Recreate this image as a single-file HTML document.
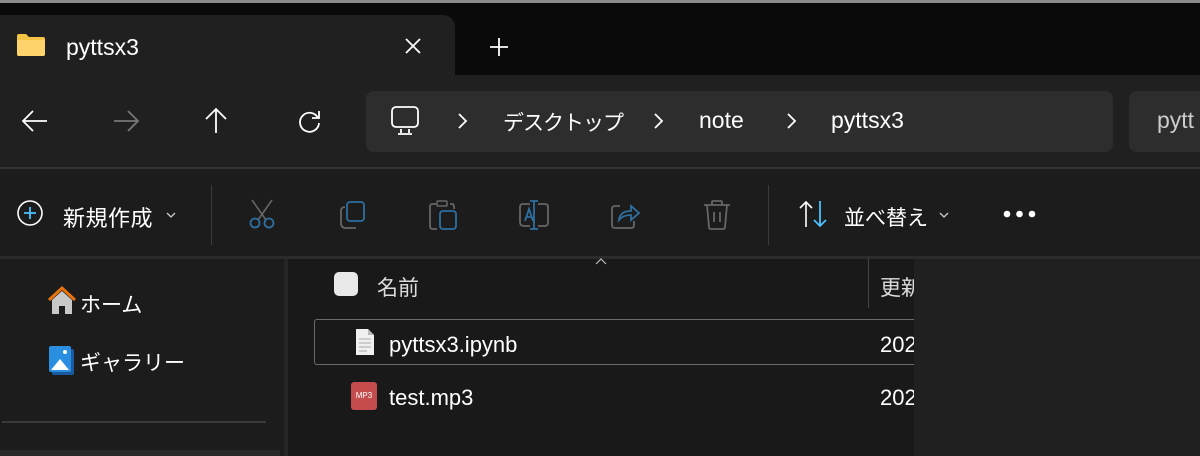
<!DOCTYPE html>
<html><head><meta charset="utf-8"><style>
*{margin:0;padding:0;box-sizing:border-box}
body{width:1200px;height:456px;overflow:hidden;background:#191919;font-family:"Liberation Sans","Noto Sans CJK JP",sans-serif;color:#fff;position:relative}
.a{position:absolute}
svg{position:absolute;overflow:visible}
.t{font-size:22px;white-space:nowrap;position:absolute}
</style></head><body>
<div class="a" style="left:0;top:0;width:1200px;height:3px;background:#8a8a8a"></div>
<div class="a" style="left:0;top:3px;width:1200px;height:73px;background:#0a0a0a"></div>
<div class="a" style="left:0;top:15px;height:70px;background:#202020;border-radius:0 12px 0 0;width:455px"></div>
<div class="a" style="left:0;top:75px;width:1200px;height:93px;background:#202020"></div>
<!-- tab -->
<svg style="left:17px;top:34px" width="28" height="22"><path d="M0 2 Q0 0 2 0 H9 L12 3 H26 Q28 3 28 5 V20 Q28 22 26 22 H2 Q0 22 0 20Z" fill="#f6c445"/><path d="M0 6 H28 V20 Q28 22 26 22 H2 Q0 22 0 20Z" fill="#ffd36b"/></svg>
<div class="t" style="left:66px;top:34px;font-size:23px">pyttsx3</div>
<svg style="left:405px;top:38px" width="16" height="16"><path d="M1 1L15 15M15 1L1 15" stroke="#fff" stroke-width="1.8"/></svg>
<svg style="left:490px;top:38px" width="18" height="18"><path d="M9 0V18M0 9H18" stroke="#fff" stroke-width="1.8"/></svg>
<!-- nav -->
<svg style="left:22px;top:110px" width="26" height="22"><path d="M1 11H25M11 1L1 11L11 21" stroke="#fff" stroke-width="1.8" fill="none"/></svg>
<svg style="left:113px;top:110px" width="26" height="22"><path d="M1 11H25M15 1L25 11L15 21" stroke="#777" stroke-width="1.8" fill="none"/></svg>
<svg style="left:205px;top:108px" width="22" height="26"><path d="M11 25V1M1 11L11 1L21 11" stroke="#fff" stroke-width="1.8" fill="none"/></svg>
<svg style="left:298px;top:109px" width="24" height="24"><path d="M20 9A9.5 9.5 0 1 0 21 14M21 2V9H14" stroke="#fff" stroke-width="1.8" fill="none"/></svg>
<div class="a" style="left:366px;top:91px;width:747px;height:61px;background:#2d2d2d;border-radius:8px"></div>
<div class="a" style="left:1129px;top:91px;width:100px;height:61px;background:#2d2d2d;border-radius:8px"></div>
<svg style="left:391px;top:106px" width="28" height="30"><rect x="1" y="1" width="26" height="20" rx="4" stroke="#fff" stroke-width="1.8" fill="none"/><path d="M10 23V27M18 23V27M7 28H21" stroke="#fff" stroke-width="1.8"/></svg>
<svg style="left:458px;top:113px" width="10" height="16"><path d="M1 1L8 8L1 15" stroke="#fff" stroke-width="1.8" fill="none"/></svg>
<div class="t" style="left:503px;top:107px;font-size:21px;letter-spacing:-1px">デスクトップ</div>
<svg style="left:654px;top:113px" width="10" height="16"><path d="M1 1L8 8L1 15" stroke="#fff" stroke-width="1.8" fill="none"/></svg>
<div class="t" style="left:699px;top:107px;font-size:23px">note</div>
<svg style="left:787px;top:113px" width="10" height="16"><path d="M1 1L8 8L1 15" stroke="#fff" stroke-width="1.8" fill="none"/></svg>
<div class="t" style="left:831px;top:107px;font-size:23px">pyttsx3</div>
<div class="t" style="left:1157px;top:107px;color:#ccc;font-size:23px">pytt</div>
<!-- toolbar -->
<div class="a" style="left:0;top:167px;width:1200px;height:2px;background:#343434"></div>
<div class="a" style="left:0;top:169px;width:1200px;height:87px;background:#1c1c1c"></div>
<svg style="left:17px;top:200px" width="26" height="26"><circle cx="13" cy="13" r="12" stroke="#fff" stroke-width="1.6" fill="none"/><path d="M13 7V19M7 13H19" stroke="#4cc2ff" stroke-width="1.8"/></svg>
<div class="t" style="left:63px;top:201px;font-size:22px;letter-spacing:0.5px">新規作成</div>
<svg style="left:166px;top:212px" width="10" height="6"><path d="M1 1L5 5L9 1" stroke="#ccc" stroke-width="1.3" fill="none"/></svg>
<div class="a" style="left:211px;top:185px;width:1px;height:60px;background:#3a3a3a"></div>
<svg style="left:249px;top:200px" width="26" height="30"><path d="M3 0L17 20M23 0L9 20" stroke="#666" stroke-width="1.6"/><circle cx="6" cy="23" r="4.5" stroke="#2f6f9f" stroke-width="1.8" fill="none"/><circle cx="20" cy="23" r="4.5" stroke="#2f6f9f" stroke-width="1.8" fill="none"/></svg>
<svg style="left:340px;top:201px" width="26" height="28"><rect x="7" y="1" width="17" height="19" rx="3" stroke="#2f6f9f" stroke-width="1.8" fill="none"/><path d="M5 6Q1 6 1 10V22Q1 27 6 27H16" stroke="#666" stroke-width="1.8" fill="none"/></svg>
<svg style="left:429px;top:200px" width="28" height="30"><path d="M7 4H3Q1 4 1 7V26Q1 29 4 29H8M21 4H23Q25 4 25 7V9" stroke="#666" stroke-width="1.8" fill="none"/><rect x="8" y="1" width="10" height="5" rx="1" stroke="#666" stroke-width="1.6" fill="none"/><rect x="11" y="11" width="16" height="18" rx="3" stroke="#2f6f9f" stroke-width="1.8" fill="none"/></svg>
<svg style="left:519px;top:200px" width="30" height="30"><path d="M11 4H4Q1 4 1 7V22Q1 26 5 26H11M19 4H26Q29 4 29 7V22Q29 26 26 26H19" stroke="#666" stroke-width="1.8" fill="none"/><path d="M15 1V29M11 1H19M11 29H19M6 21L10 9L14 21M7 17H13" stroke="#2f6f9f" stroke-width="1.8" fill="none"/></svg>
<svg style="left:611px;top:201px" width="30" height="28"><path d="M9 5H4Q1 5 1 8V24Q1 27 4 27H20Q23 27 23 24V20" stroke="#666" stroke-width="1.8" fill="none"/><path d="M8 19Q9 10 20 10V5L28 12L20 19V14Q12 14 8 19Z" stroke="#2f6f9f" stroke-width="1.8" fill="none"/></svg>
<svg style="left:703px;top:200px" width="28" height="30"><path d="M1 5H27M9 5V2Q9 1 10 1H18Q19 1 19 2V5M4 5L6 27Q6 29 8 29H20Q22 29 22 27L24 5M11 12V22M17 12V22" stroke="#666" stroke-width="1.8" fill="none"/></svg>
<div class="a" style="left:768px;top:185px;width:1px;height:60px;background:#3a3a3a"></div>
<svg style="left:799px;top:201px" width="30" height="26"><path d="M7 26V1M1 7L7 1L13 7" stroke="#fff" stroke-width="1.6" fill="none"/><path d="M21 0V25M15 19L21 25L27 19" stroke="#4cc2ff" stroke-width="1.8" fill="none"/></svg>
<div class="t" style="left:844px;top:202px;font-size:21px">並べ替え</div>
<svg style="left:939px;top:212px" width="10" height="6"><path d="M1 1L5 5L9 1" stroke="#ccc" stroke-width="1.3" fill="none"/></svg>
<svg style="left:1003px;top:210px" width="34" height="8"><circle cx="4" cy="4" r="3.3" fill="#fff"/><circle cx="16.5" cy="4" r="3.3" fill="#fff"/><circle cx="29" cy="4" r="3.3" fill="#fff"/></svg>
<div class="a" style="left:0;top:256px;width:1200px;height:3px;background:#2b2b2b"></div>
<!-- panes -->
<div class="a" style="left:0;top:259px;width:284px;height:197px;background:#1c1c1c"></div>
<div class="a" style="left:284px;top:259px;width:4px;height:197px;background:#252525"></div>
<div class="a" style="left:2px;top:421px;width:264px;height:2px;background:#3a3a3a"></div>
<div class="a" style="left:0;top:450px;width:280px;height:6px;background:#2a2a2a"></div>
<svg style="left:48px;top:287px" width="28" height="28"><path d="M1 13L14 1L27 13" stroke="#e8730c" stroke-width="3" fill="none"/><path d="M4 13V27H11V19H17V27H24V13L14 4Z" fill="#c8c8c8"/></svg>
<div class="t" style="left:80px;top:289px;font-size:21px">ホーム</div>
<svg style="left:48px;top:345px" width="28" height="32"><rect x="4" y="4" width="22" height="26" rx="2" fill="#1a5aa0"/><rect x="1" y="1" width="22" height="26" rx="2" fill="#2a8fe0"/><path d="M3 25L12 14L21 25Z" fill="#fff"/><circle cx="17" cy="7" r="2" fill="#fff"/></svg>
<div class="t" style="left:80px;top:347px;font-size:21px">ギャラリー</div>
<svg style="left:595px;top:258px" width="12" height="7"><path d="M1 6L6 1L11 6" stroke="#bbb" stroke-width="1.2" fill="none"/></svg>
<div class="a" style="left:334px;top:272px;width:24px;height:24px;border-radius:5px;background:#e8e8e8"></div>
<div class="t" style="left:377px;top:272px;font-size:21px;color:#ddd">名前</div>
<div class="a" style="left:868px;top:258px;width:1px;height:50px;background:#444"></div>
<div class="t" style="left:880px;top:272px;font-size:21px;color:#ddd">更新</div>
<div class="a" style="left:314px;top:319px;width:600px;height:46px;border:1.5px solid #6a6a6a;border-right:none;border-radius:3px 0 0 3px"></div>
<svg style="left:355px;top:328px" width="20" height="28"><path d="M1 1H13L19 7V27H1Z" fill="#f0f0f0"/><path d="M13 1V7H19" fill="#bbb"/><path d="M4 11H16M4 15H16M4 19H16M4 23H12" stroke="#aaa" stroke-width="1"/></svg>
<div class="t" style="left:389px;top:332px">pyttsx3.ipynb</div>
<div class="t" style="left:880px;top:332px">2024</div>
<div class="a" style="left:351px;top:382px;width:26px;height:28px;background:#c44c4c;border-radius:3px;font-size:8px;text-align:center;line-height:28px;color:#fff">MP3</div>
<div class="t" style="left:389px;top:385px">test.mp3</div>
<div class="t" style="left:880px;top:385px">2024</div>
<div class="a" style="left:914px;top:259px;width:286px;height:197px;background:#202020"></div>
</body></html>
